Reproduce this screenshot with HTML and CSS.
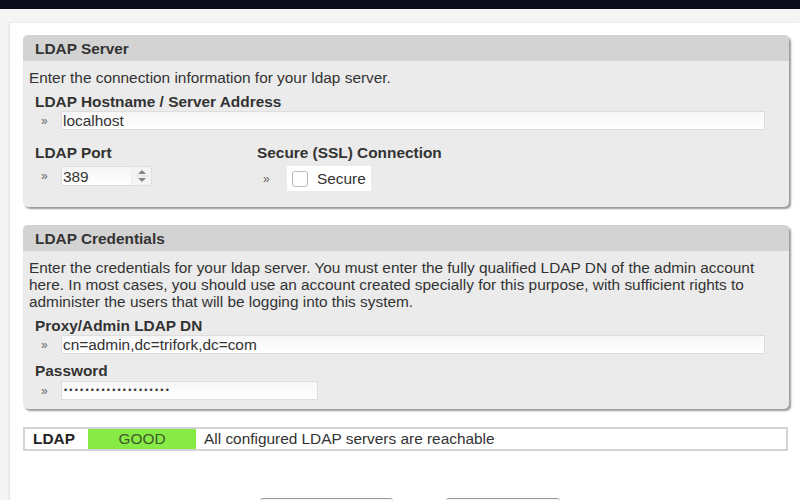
FILE: index.html
```html
<!DOCTYPE html>
<html>
<head>
<meta charset="utf-8">
<link rel="stylesheet" href="styles.css">
</head>
<body>
<div class="topbar"></div>
<div class="page">
  <div class="panel">
    <div class="panel-head">LDAP Server</div>
    <div class="panel-body body1">
      <p class="desc">Enter the connection information for your ldap server.</p>
      <div class="label">LDAP Hostname / Server Address</div>
      <div class="field">
        <span class="raquo">»</span>
        <div class="input wide">localhost</div>
      </div>
      <div class="cols">
        <div class="col col-port">
          <div class="label">LDAP Port</div>
          <div class="field field-col">
            <span class="raquo">»</span>
            <div class="input port">389
              <span class="spin">
                <svg width="14" height="18" viewBox="0 0 14 18"><path d="M3 7 L7 3 L11 7 Z" fill="#888"/><path d="M3 11 L7 15 L11 11 Z" fill="#888"/><line x1="1" y1="9" x2="13" y2="9" stroke="#ddd"/></svg>
              </span>
            </div>
          </div>
        </div>
        <div class="col">
          <div class="label">Secure (SSL) Connection</div>
          <div class="field field-col">
            <span class="raquo">»</span>
            <div class="checkwrap"><span class="checkbox"></span><span>Secure</span></div>
          </div>
        </div>
      </div>
    </div>
  </div>

  <div class="panel">
    <div class="panel-head">LDAP Credentials</div>
    <div class="panel-body body2">
      <p class="desc">Enter the credentials for your ldap server. You must enter the fully qualified LDAP DN of the admin account here. In most cases, you should use an account created specially for this purpose, with sufficient rights to administer the users that will be logging into this system.</p>
      <div class="label">Proxy/Admin LDAP DN</div>
      <div class="field">
        <span class="raquo">»</span>
        <div class="input wide short">cn=admin,dc=trifork,dc=com</div>
      </div>
      <div class="label label-pass">Password</div>
      <div class="field field-pass">
        <span class="raquo">»</span>
        <div class="input pass short">••••••••••••••••••••</div>
      </div>
    </div>
  </div>

  <div class="status">
    <div class="st-name">LDAP</div>
    <div class="st-good">GOOD</div>
    <div class="st-msg">All configured LDAP servers are reachable</div>
  </div>

  <div class="buttons">
    <div class="btn b1"></div>
    <div class="btn b2"></div>
  </div>
</div>
</body>
</html>
```
FILE: styles.css
```css
html, body {
  margin: 0;
  padding: 0;
  background: #f4f4f4;
  font-family: "Liberation Sans", Arial, sans-serif;
  font-size: 15.4px;
  color: #333;
  overflow: hidden;
  height: 500px;
}
.topbar {
  height: 9px;
  background: #0c0c1a;
}
.page {
  margin: 14px 0 0 10px;
  background: #fff;
  padding: 12px 11px 0 13px;
  height: 600px;
  box-shadow: -1px 0 2px #e0e0e0;
}
.panel {
  background: #ebebeb;
  border-radius: 5px;
  box-shadow: 2px 2px 2px #999;
  margin-bottom: 18px;
}
.panel-head {
  height: 26px;
  line-height: 27px;
  background: #d3d3d3;
  border-radius: 5px 5px 0 0;
  font-weight: bold;
  padding-left: 12px;
  color: #333;
}
.panel-body {
  padding: 8px 6px 16px 6px;
}
.body2 {
  padding-top: 8px;
  padding-bottom: 9px;
}
.desc {
  margin: 0;
  line-height: 17px;
}
.label {
  font-weight: bold;
  line-height: 17px;
  padding-left: 6px;
  margin-top: 7px;
}
.label-pass {
  margin-top: 8px;
}
.field {
  display: flex;
  align-items: center;
  margin-top: 1px;
}
.field-pass {
  margin-top: 2px;
}
.field-col {
  margin-top: 5px;
}
.raquo {
  width: 32px;
  padding-left: 12px;
  box-sizing: border-box;
  color: #666;
  font-size: 12px;
}
.input {
  height: 19px;
  line-height: 19px;
  box-sizing: border-box;
  background: linear-gradient(#f6f6f6, #fff);
  border: 1px solid #ddd;
  padding-left: 1px;
  color: #333;
  display: flex;
  align-items: center;
}
.wide {
  width: 704px;
}
.short {
  height: 19px;
}
.pass {
  width: 257px;
  font-size: 9px;
  letter-spacing: 2.2px;
  padding-left: 2px;
}
.cols {
  display: flex;
  margin-top: 7px;
}
.col-port {
  width: 222px;
}
.port {
  width: 91px;
  height: 20px;
  position: relative;
}
.spin {
  position: absolute;
  right: 0;
  top: 0;
  width: 19px;
  height: 18px;
  display: flex;
  justify-content: center;
  border-left: 1px solid #eee;
  background: #f4f4f4;
}
.checkwrap {
  display: flex;
  align-items: center;
  background: #fff;
  height: 25px;
  width: 84px;
  margin-left: 4px;
  padding-left: 5px;
  box-sizing: border-box;
}
.checkbox {
  width: 14px;
  height: 14px;
  border: 1px solid #bbb;
  border-radius: 3px;
  background: #fff;
  margin-right: 9px;
}
.status {
  display: flex;
  border: 2px solid #d4d4d4;
  background: #fff;
  height: 24px;
  box-sizing: border-box;
  width: 765px;
  line-height: 20px;
}
.st-name {
  width: 63px;
  padding-left: 8px;
  box-sizing: border-box;
  font-weight: bold;
  color: #222;
}
.st-good {
  width: 108px;
  background: #88ea45;
  text-align: center;
  color: #3d5a2a;
}
.st-msg {
  padding-left: 8px;
  color: #333;
}
.buttons {
  display: flex;
  margin-top: 47px;
  padding-left: 237px;
  gap: 53px;
}
.btn {
  height: 26px;
  border-top: 1px solid #999;
  border-radius: 3px 3px 0 0;
  background: #f6f6f6;
}
.b1 { width: 133px; }
.b2 { width: 114px; }
```
